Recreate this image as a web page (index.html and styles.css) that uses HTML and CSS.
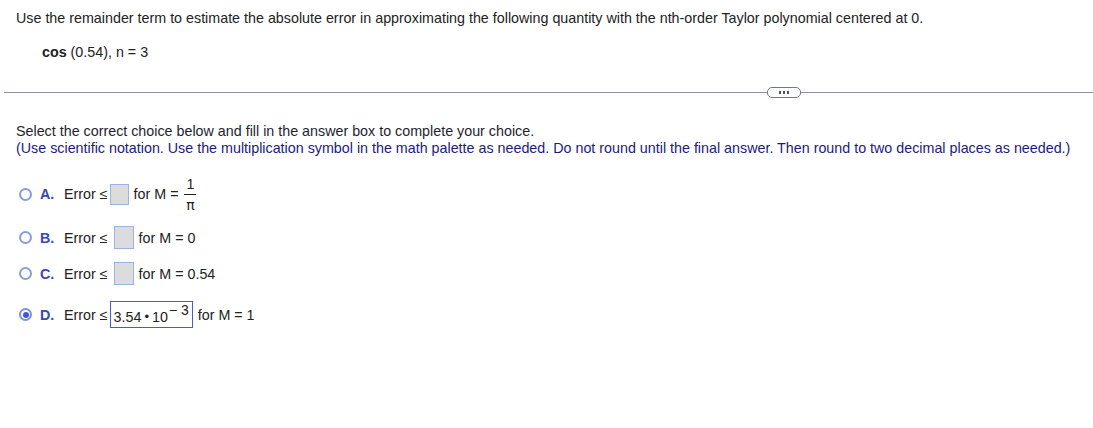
FILE: index.html
```html
<!DOCTYPE html>
<html>
<head>
<meta charset="utf-8">
<link rel="stylesheet" href="styles.css">
</head>
<body>
<div class="question">
  <p class="prompt">Use the remainder term to estimate the absolute error in approximating the following quantity with the nth-order Taylor polynomial centered at 0.</p>
  <p class="expr"><b>cos</b> (0.54), n = 3</p>
</div>
<div class="divider">
  <span class="line"></span>
  <span class="more"><i></i><i></i><i></i></span>
  <span class="line short"></span>
</div>
<div class="answer">
  <p class="instr">Select the correct choice below and fill in the answer box to complete your choice.</p>
  <p class="note">(Use scientific notation. Use the multiplication symbol in the math palette as needed. Do not round until the final answer. Then round to two decimal places as needed.)</p>
  <div class="choices">
    <div class="choice ca">
      <span class="radio"></span><span class="letter">A.</span>
      <span class="lbl">Error ≤</span><span class="box boxa"></span>
      <span class="lbl">for M =</span>
      <span class="frac"><span class="num">1</span><span class="den">π</span></span>
    </div>
    <div class="choice cb">
      <span class="radio"></span><span class="letter">B.</span>
      <span class="lbl">Error ≤</span><span class="box boxb"></span>
      <span class="lbl">for M = 0</span>
    </div>
    <div class="choice cc">
      <span class="radio"></span><span class="letter">C.</span>
      <span class="lbl">Error ≤</span><span class="box boxb"></span>
      <span class="lbl">for M = 0.54</span>
    </div>
    <div class="choice cd">
      <span class="radio on"></span><span class="letter">D.</span>
      <span class="lbl">Error ≤</span><span class="filled">3.54<span class="dot">•</span>10<sup>− 3</sup></span>
      <span class="lbl">for M = 1</span>
    </div>
  </div>
</div>
</body>
</html>
```
FILE: styles.css
```css
body {
  margin: 0;
  font-family: "Liberation Sans", Arial, sans-serif;
  font-size: 14.3px;
  color: #222;
  background: #fff;
}
p { margin: 0; }
.question { padding: 10px 0 0 16px; }
.prompt { line-height: 17px; }
.expr { margin: 17px 0 0 26px; line-height: 17px; }
.expr b { font-weight: bold; }
.divider {
  display: flex;
  align-items: center;
  margin-top: 26px;
  padding-left: 4px;
  height: 11px;
}
.line { flex: 0 0 763px; height: 1px; background: #8a92a2; }
.line.short { flex: 1 1 auto; }
.more {
  box-sizing: border-box;
  width: 34px;
  height: 11px;
  border: 1px solid #6f7889;
  border-radius: 5px;
  display: flex;
  justify-content: center;
  align-items: center;
  gap: 2px;
  background: #fff;
}
.more i { width: 2px; height: 3px; background: #4c5566; display: block; }
.answer { padding: 25px 0 0 16px; }
.instr { line-height: 17px; color: #1e1e2e; }
.note { line-height: 17px; color: #1b1b7c; }
.choices { margin-top: 20px; }
.choice { display: flex; align-items: center; padding-left: 3px; }
.radio {
  box-sizing: border-box;
  width: 13px; height: 13px;
  border: 2px solid #8b9be0;
  border-radius: 50%;
  margin-right: 8px;
  background: #fff;
  position: relative;
}
.radio.on { border-color: #7d8fe6; }
.radio.on::after {
  content: "";
  position: absolute;
  left: 1.5px; top: 1.5px;
  width: 6px; height: 6px;
  border-radius: 50%;
  background: #3b5ad1;
}
.letter { font-weight: bold; color: #3848b8; width: 24px; }
.lbl { white-space: nowrap; }
.box {
  box-sizing: border-box;
  background: #dcdcdc;
  border: 1px solid #9ab3e4;
}
.boxa { width: 19px; height: 21px; margin: 0 5px 0 2px; }
.boxb { width: 20px; height: 23px; margin: 0 5px 0 6px; }
.ca { height: 34px; }
.cb { height: 23px; margin-top: 15px; }
.cc { height: 23px; margin-top: 13px; }
.cd { height: 27px; margin-top: 16px; }
.frac {
  display: inline-flex;
  flex-direction: column;
  align-items: center;
  margin-left: 6px;
}
.num { padding: 0 2px 2px; border-bottom: 1px solid #222; line-height: 16px; }
.den { font-family: "DejaVu Sans", sans-serif; font-size: 14px; line-height: 16px; padding-top: 2px; }
.filled {
  box-sizing: border-box;
  display: inline-flex;
  align-items: center;
  height: 27px;
  border: 1px solid #3f5fcf;
  padding: 4px 3px 0 3px;
  margin: 0 5px 0 2px;
  white-space: nowrap;
}
.dot { font-size: 13px; margin: 0 3px; }
.filled sup { font-size: 14px; position: relative; top: -7px; vertical-align: baseline; margin-left: 1px; }
```
